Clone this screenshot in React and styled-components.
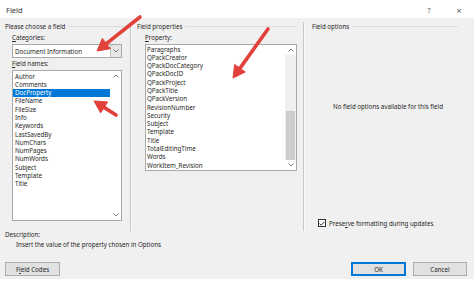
import React from 'react';
import styled, { createGlobalStyle } from 'styled-components';

const GlobalStyle = createGlobalStyle`
  html, body { margin: 0; padding: 0; background: #fff; }
  * { box-sizing: border-box; }
`;

const fieldNames = [
  'Author', 'Comments', 'DocProperty', 'FileName', 'FileSize', 'Info', 'Keywords',
  'LastSavedBy', 'NumChars', 'NumPages', 'NumWords', 'Subject', 'Template', 'Title',
];

const properties = [
  'Paragraphs', 'QPackCreator', 'QPackDocCategory', 'QPackDocID', 'QPackProject',
  'QPackTitle', 'QPackVersion', 'RevisionNumber', 'Security', 'Subject', 'Template',
  'Title', 'TotalEditingTime', 'Words', 'WorkItem_Revision',
];

const arrows = [
  { from: [140, 17], to: [97, 51] },
  { from: [116, 115], to: [94, 101] },
  { from: [268, 29], to: [233, 78] },
];

const Window = styled.div`
  position: relative;
  width: 474px;
  height: 282px;
  overflow: hidden;
  display: flex;
  flex-direction: column;
  font-family: "Noto Sans", "Open Sans", sans-serif;
  font-size: 6.2px;
  color: #262626;
  background: #f0f0f0;
`;

const TitleBar = styled.div`
  height: 18px;
  flex: none;
  background: #fff;
  display: flex;
  align-items: center;
  justify-content: space-between;
  padding: 2px 0 0 6px;
`;

const Title = styled.span`
  font-size: 7.5px;
  color: #333;
`;

const TitleButtons = styled.div`
  display: flex;
  align-items: center;
`;

const TitleBtn = styled.span`
  width: 30px;
  text-align: center;
  font-size: ${p => p.$size || 7}px;
  color: #555;
`;

const Body = styled.div`
  flex: 1;
  display: flex;
  flex-direction: column;
  padding: 4px 0 0 5px;
`;

const Groups = styled.div`
  display: grid;
  grid-template-columns: 126px 173px 1fr;
  height: 209px;
`;

const Group = styled.div`
  display: flex;
  flex-direction: column;
  padding: 0 ${p => p.$padRight}px 0 ${p => p.$padLeft}px;
  border-right: ${p => (p.$divider ? '1px solid #c8c8c8' : 'none')};
  box-shadow: ${p => (p.$divider ? '1px 0 0 #fafafa' : 'none')};
`;

const GroupBody = styled.div`
  display: flex;
  flex-direction: column;
  padding: 0 ${p => p.$padRight || 0}px 0 ${p => p.$padLeft || 0}px;
`;

const Legend = styled.div`
  display: flex;
  align-items: center;
  gap: 3px;
  height: 9px;
  line-height: 9px;
  margin-left: ${p => p.$shift || 0}px;
  white-space: nowrap;

  &::after {
    content: '';
    flex: 1;
    height: 1px;
    background: #dcdcdc;
  }
`;

const Label = styled.div`
  height: 8px;
  line-height: 8px;
  margin-top: ${p => p.$top}px;
  white-space: nowrap;
`;

const Combo = styled.div`
  margin-top: 2px;
  height: 14px;
  display: flex;
  background: #fff;
  border: 1px solid #a9a9a9;
`;

const ComboValue = styled.div`
  flex: 1;
  display: flex;
  align-items: center;
  padding-left: 2px;
`;

const ComboButton = styled.div`
  width: 11px;
  display: flex;
  align-items: center;
  justify-content: center;
  background: #e6e6e6;
  border-left: 1px solid #c4c4c4;
`;

const ListBox = styled.div`
  margin-top: 2px;
  height: ${p => p.$height}px;
  display: flex;
  background: #fff;
  border: 1px solid #a9a9a9;
`;

const Items = styled.div`
  flex: 1;
  padding-top: ${p => p.$top}px;
`;

const Item = styled.div`
  height: 8.3px;
  line-height: 8.3px;
  padding-left: ${p => p.$pad}px;
  white-space: nowrap;
  background: ${p => (p.$selected ? '#0078d7' : 'transparent')};
  color: ${p => (p.$selected ? '#fff' : '#262626')};
`;

const ScrollBar = styled.div`
  width: 11px;
  display: flex;
  flex-direction: column;
  align-items: stretch;
  background: ${p => p.$track};
`;

const ScrollArrow = styled.div`
  height: 10px;
  display: flex;
  align-items: center;
  justify-content: center;
  background: #fff;
`;

const ScrollTrack = styled.div`
  flex: 1;
  display: flex;
  flex-direction: column;
  justify-content: flex-end;
  padding: 0 1px;
`;

const Thumb = styled.div`
  height: ${p => p.$height}px;
  background: #cdcdcd;
`;

const Message = styled.div`
  flex: 1;
  display: flex;
  align-items: center;
  justify-content: center;
  padding-bottom: 37px;
  padding-left: 6px;
`;

const CheckRow = styled.div`
  display: flex;
  align-items: center;
  gap: 3px;
  margin: 0 0 4px 6px;
  height: 8px;
`;

const CheckBox = styled.div`
  width: 8px;
  height: 8px;
  border: 1px solid #333;
  background: #fff;
  display: flex;
  align-items: center;
  justify-content: center;
`;

const DescLabel = styled.div`
  height: 8px;
  line-height: 8px;
`;

const DescText = styled.div`
  height: 8px;
  line-height: 8px;
  margin-top: 2px;
  padding-left: 11px;
`;

const Footer = styled.div`
  display: flex;
  align-items: center;
  margin-top: 13px;
  padding-right: 7px;
`;

const Button = styled.div`
  width: ${p => p.$width}px;
  height: 14px;
  display: flex;
  align-items: center;
  justify-content: center;
  background: #e1e1e1;
  border: 1px solid ${p => (p.$default ? '#0078d7' : '#adadad')};
  box-shadow: ${p => (p.$default ? 'inset 0 0 0 1px #0078d7' : 'none')};
  margin-left: ${p => p.$gap || 0}px;
`;

const Spacer = styled.div`
  flex: 1;
`;

const BottomStrip = styled.div`
  height: 3px;
  flex: none;
  background: #fff;
`;

const Overlay = styled.svg`
  position: absolute;
  left: 0;
  top: 0;
  pointer-events: none;
`;

const Chevron = ({ up }) => (
  <svg width="6" height="4" viewBox="0 0 6 4">
    <path d={up ? 'M0.5 3.5 L3 1 L5.5 3.5' : 'M0.5 0.5 L3 3 L5.5 0.5'} fill="none" stroke="#606060" strokeWidth="0.8" />
  </svg>
);

const Arrow = ({ from, to }) => {
  const dx = to[0] - from[0];
  const dy = to[1] - from[1];
  const len = Math.hypot(dx, dy);
  const ux = dx / len;
  const uy = dy / len;
  const headLen = 12;
  const half = 6.5;
  const bx = to[0] - ux * headLen;
  const by = to[1] - uy * headLen;
  const pts = [
    [to[0], to[1]],
    [bx - uy * half, by + ux * half],
    [bx + uy * half, by - ux * half],
  ].map(p => p.join(',')).join(' ');
  return (
    <g>
      <line x1={from[0]} y1={from[1]} x2={bx + ux * 2} y2={by + uy * 2} stroke="#e2403a" strokeWidth="3.6" strokeLinecap="round" />
      <polygon points={pts} fill="#e2403a" stroke="#e2403a" strokeWidth="1" strokeLinejoin="round" />
    </g>
  );
};

const App = () => (
  <>
    <GlobalStyle />
    <Window>
      <TitleBar>
        <Title>Field</Title>
        <TitleButtons>
          <TitleBtn>?</TitleBtn>
          <TitleBtn $size={9}>×</TitleBtn>
        </TitleButtons>
      </TitleBar>

      <Body>
        <Groups>
          <Group $padLeft={0} $padRight={1} $divider>
            <Legend>Please choose a field</Legend>
            <GroupBody $padLeft={7} $padRight={7}>
              <Label $top={3}><u>C</u>ategories:</Label>
              <Combo>
                <ComboValue>Document Information</ComboValue>
                <ComboButton><Chevron /></ComboButton>
              </Combo>
              <Label $top={2}><u>F</u>ield names:</Label>
              <ListBox $height={151}>
                <Items $top={1.5}>
                  {fieldNames.map(n => (
                    <Item key={n} $pad={2} $selected={n === 'DocProperty'}>{n}</Item>
                  ))}
                </Items>
                <ScrollBar $track="#fff">
                  <ScrollArrow><Chevron up /></ScrollArrow>
                  <ScrollTrack />
                  <ScrollArrow><Chevron /></ScrollArrow>
                </ScrollBar>
              </ListBox>
            </GroupBody>
          </Group>

          <Group $padLeft={14} $padRight={6} $divider>
            <Legend $shift={-8}>Field properties</Legend>
            <Label $top={3}><u>P</u>roperty:</Label>
            <ListBox $height={127}>
              <Items $top={0.5}>
                {properties.map(n => (
                  <Item key={n} $pad={1}>{n}</Item>
                ))}
              </Items>
              <ScrollBar $track="#f0f0f0">
                <ScrollArrow><Chevron up /></ScrollArrow>
                <ScrollTrack>
                  <Thumb $height={49} />
                </ScrollTrack>
                <ScrollArrow><Chevron /></ScrollArrow>
              </ScrollBar>
            </ListBox>
          </Group>

          <Group $padLeft={8} $padRight={16}>
            <Legend>Field options</Legend>
            <Message>No field options available for this field</Message>
            <CheckRow>
              <CheckBox>
                <svg width="6" height="5" viewBox="0 0 6 5">
                  <path d="M0.5 2.6 L2.2 4.2 L5.5 0.7" fill="none" stroke="#222" strokeWidth="0.9" />
                </svg>
              </CheckBox>
              <span>Prese<u>r</u>ve formatting during updates</span>
            </CheckRow>
          </Group>
        </Groups>

        <DescLabel>Description:</DescLabel>
        <DescText>Insert the value of the property chosen in Options</DescText>

        <Footer>
          <Button $width={55}>F<u>i</u>eld Codes</Button>
          <Spacer />
          <Button $width={55} $default>OK</Button>
          <Button $width={54} $gap={7}>Cancel</Button>
        </Footer>
      </Body>
      <BottomStrip />

      <Overlay width="474" height="282" viewBox="0 0 474 282">
        {arrows.map((a, i) => (
          <Arrow key={i} from={a.from} to={a.to} />
        ))}
      </Overlay>
    </Window>
  </>
);

export default App;
